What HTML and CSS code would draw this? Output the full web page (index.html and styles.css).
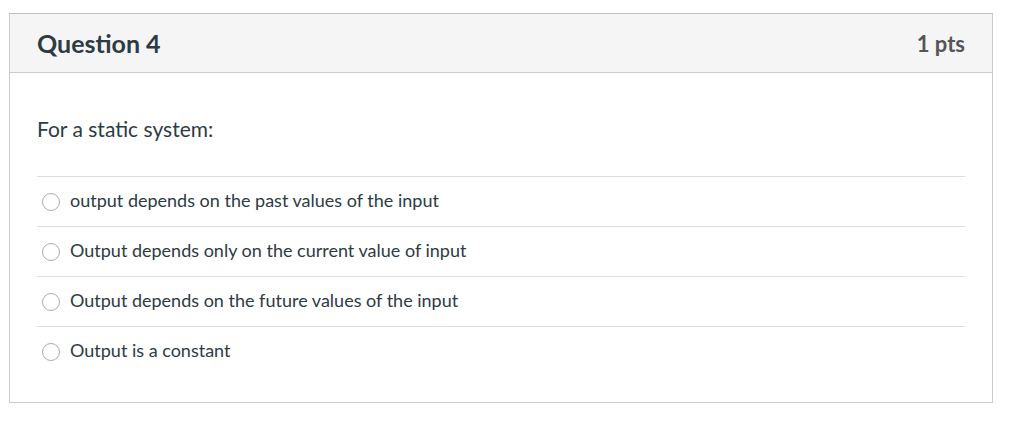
FILE: index.html
```html
<!DOCTYPE html>
<html>
<head>
<meta charset="utf-8">
<link rel="stylesheet" href="styles.css">
</head>
<body>
<div class="quiz">
  <div class="question">
    <div class="header">
      <div class="title">Question 4</div>
      <div class="points">1 pts</div>
    </div>
    <div class="content">
      <div class="prompt">For a static system:</div>
      <div class="answers">
        <label class="answer"><span class="radio"></span><span class="text">output depends on the past values of the input</span></label>
        <label class="answer"><span class="radio"></span><span class="text">Output depends only on the current value of input</span></label>
        <label class="answer"><span class="radio"></span><span class="text">Output depends on the future values of the input</span></label>
        <label class="answer"><span class="radio"></span><span class="text">Output is a constant</span></label>
      </div>
    </div>
  </div>
</div>
</body>
</html>
```
FILE: styles.css
```css
html, body {
  margin: 0;
  padding: 0;
  background: #ffffff;
}
body {
  font-family: Lato, "Open Sans", sans-serif;
  color: #2d3b45;
}
.quiz {
  padding: 13px 30px 0 9px;
}
.question {
  border: 1px solid #c7cdd1;
  border-top-color: #bfbfbf;
  width: 982px;
  box-sizing: content-box;
}
.header {
  display: flex;
  justify-content: space-between;
  align-items: center;
  height: 58px;
  padding: 0 27px 0 27px;
  background: #f5f5f5;
  border-bottom: 1px solid #c7cdd1;
}
.title {
  font-weight: 700;
  font-size: 25px;
  color: #2d3b45;
}
.points {
  font-weight: 700;
  font-size: 22px;
  color: #565656;
}
.content {
  padding: 0 27px 26px 27px;
}
.prompt {
  font-size: 21px;
  padding-top: 43px;
  height: 60px;
  line-height: 26px;
}
.answers {
  display: flex;
  flex-direction: column;
}
.answer {
  display: flex;
  align-items: center;
  gap: 10px;
  height: 49px;
  border-top: 1px solid #dddddd;
  padding-left: 5px;
  font-size: 18px;
}
.radio {
  width: 18px;
  height: 18px;
  border: 1px solid #ababab;
  border-radius: 50%;
  background: #fff;
  box-sizing: border-box;
  flex: none;
}
.text {
  line-height: 22px;
  padding-bottom: 4px;
}
```
